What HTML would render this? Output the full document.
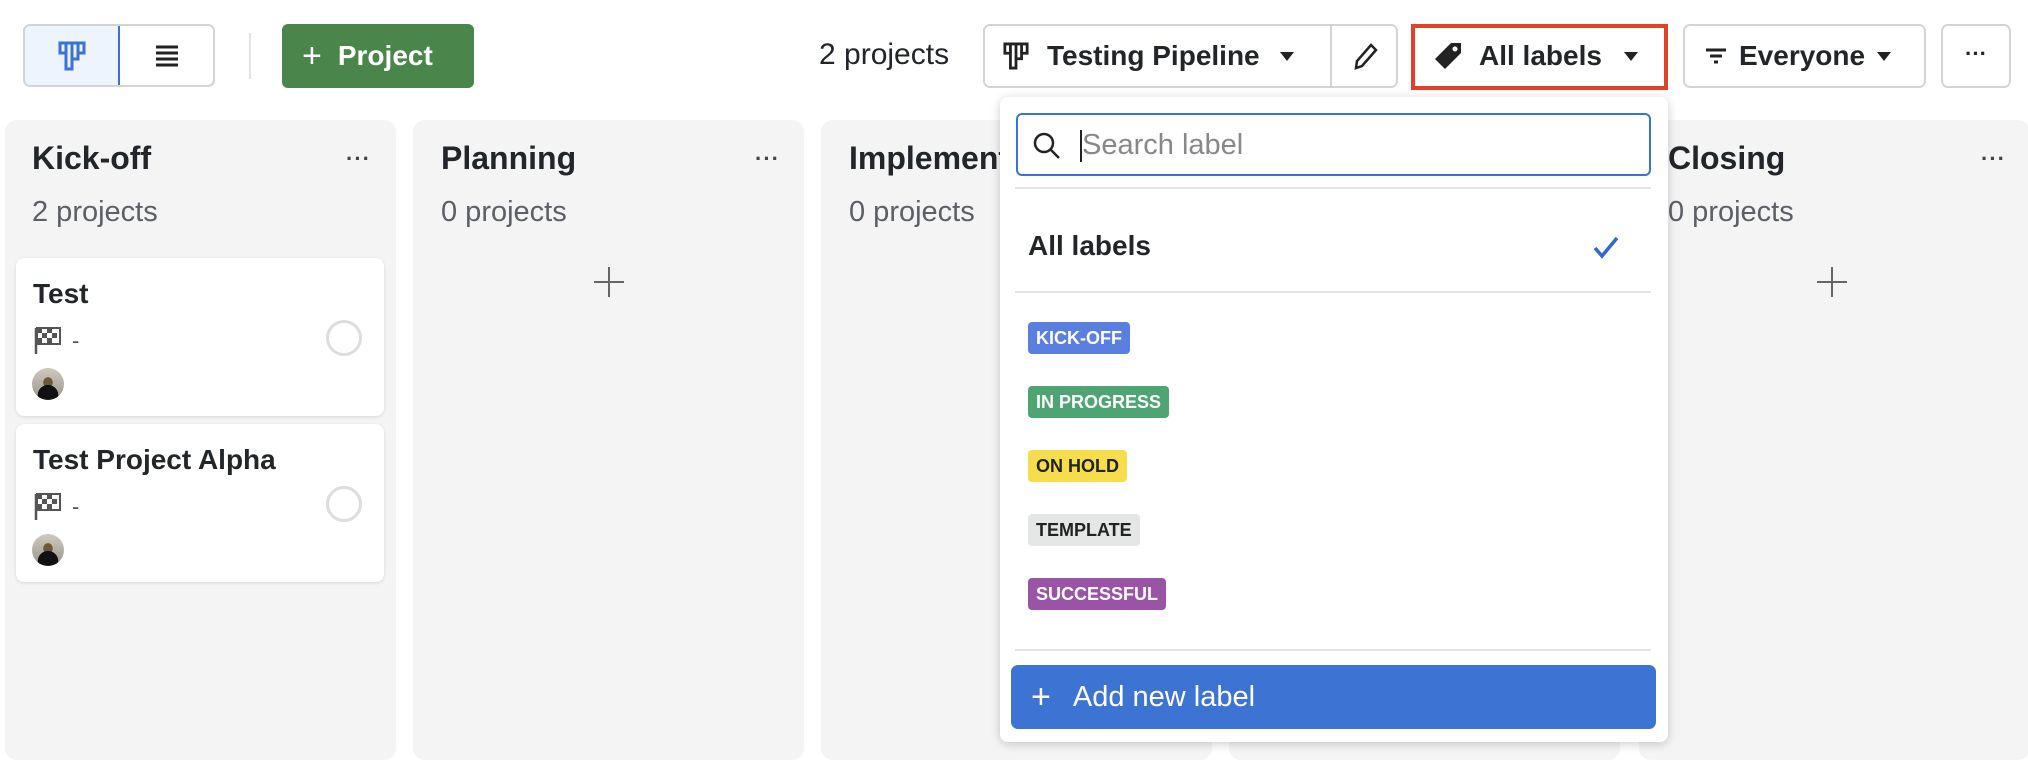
<!DOCTYPE html>
<html><head><meta charset="utf-8"><style>
*{box-sizing:border-box;margin:0;padding:0}
body{width:2028px;height:750px;background:#fff;font-family:"Liberation Sans",sans-serif;color:#22252a;position:relative;overflow:hidden}
.abs{position:absolute}
.btn{position:absolute;border:2px solid #d4d4d4;border-radius:7px;background:#fff;display:flex;align-items:center}
.col{position:absolute;top:120px;width:391px;height:640px;background:#f4f4f4;border-radius:12px}
.ct{position:absolute;left:27px;top:140px;font-size:32px;font-weight:bold}
.cc{position:absolute;left:27px;top:196px;font-size:29px;color:#5c5f66}
.dots{position:absolute;font-size:22px;font-weight:bold;letter-spacing:1px;color:#444}
.plus{position:absolute;width:30px;height:30px}
.plus:before,.plus:after{content:"";position:absolute;background:#666}
.plus:before{left:14px;top:0;width:2px;height:30px}
.plus:after{top:14px;left:0;height:2px;width:30px}
.card{position:absolute;left:16px;width:368px;height:158px;background:#fff;border-radius:8px;box-shadow:0 1px 3px rgba(0,0,0,.12)}
.card .t{position:absolute;left:17px;top:20px;font-size:28px;font-weight:bold}
.card .f{position:absolute;left:18px;top:68px}
.card .d{position:absolute;left:56px;top:70px;font-size:22px;color:#555}
.card .c{position:absolute;left:310px;top:62px;width:36px;height:36px;border:3px solid #ddd;border-radius:50%}
.card .a{position:absolute;left:16px;top:110px;width:32px;height:32px;border-radius:50%;background:radial-gradient(circle at 50% 85%,#111 0 32%,transparent 33%),radial-gradient(ellipse at 50% 45%,#6a5a3a 0 20%,transparent 22%),linear-gradient(#cfc9bf,#9a958c)}
.lbl{position:absolute;left:1028px;height:32px;border-radius:4px;font-size:18px;font-weight:bold;line-height:32px;padding:0 8px;color:#fff}
.tri{display:inline-block;width:0;height:0;border-left:7px solid transparent;border-right:7px solid transparent;border-top:9px solid #222}
</style></head><body>

<div class="btn" style="left:23px;top:24px;width:192px;height:63px;padding:0;overflow:hidden">
 <div style="width:97px;background:#eef4fd;border:2px solid #3a72d6;border-radius:6px 0 0 6px;margin:-2px 0 -2px -2px;height:63px;display:flex;align-items:center;justify-content:center">
  <svg width="28" height="30" viewBox="0 0 28 30"><path d="M2 2h24v10h-6v6h-6v10h-6V12H2z" fill="none" stroke="#3a72d6" stroke-width="3"/><path d="M8 2v10M14 2v16M20 2v10" stroke="#3a72d6" stroke-width="3"/></svg>
 </div>
 <div style="flex:1;display:flex;align-items:center;justify-content:center">
  <svg width="26" height="24"><path d="M2 3h22M2 9h22M2 15h22M2 21h22" stroke="#222" stroke-width="3"/></svg>
 </div>
</div>
<div class="abs" style="left:249px;top:33px;width:2px;height:46px;background:#e2e2e2"></div>
<div class="abs" style="left:282px;top:24px;width:192px;height:64px;background:#4a854c;border-radius:6px;color:#fff;font-size:28px;font-weight:bold;display:flex;align-items:center;padding-left:20px">
 <span style="font-size:34px;font-weight:normal;margin-right:16px">+</span>Project</div>
<div class="abs" style="left:819px;top:38px;font-size:30px">2 projects</div>

<div class="btn" style="left:983px;top:24px;width:415px;height:64px">
 <svg style="margin-left:18px" width="26" height="30" viewBox="0 0 28 30"><path d="M2 2h24v10h-6v6h-6v10h-6V12H2z" fill="none" stroke="#222" stroke-width="3"/><path d="M8 2v10M14 2v16M20 2v10" stroke="#222" stroke-width="3"/></svg>
 <span style="font-size:28px;font-weight:bold;margin-left:18px">Testing Pipeline</span>
 <span class="tri" style="margin-left:20px"></span>
 <div style="position:absolute;left:345px;top:0;width:2px;height:60px;background:#d4d4d4"></div>
 <svg style="position:absolute;left:368px;top:16px" width="26" height="28" viewBox="0 0 26 28"><path d="M18 3l5 5L9 24l-6 2 1-7z" fill="none" stroke="#222" stroke-width="2.5"/></svg>
</div>
<div class="abs" style="left:1411px;top:24px;width:257px;height:66px;border:4px solid #e2402a"></div>
<div class="btn" style="left:1413px;top:26px;width:252px;height:60px;border:none;background:transparent">
 <svg style="margin-left:20px" width="30" height="30" viewBox="0 0 30 30"><path d="M18 2h10v10L12 28 2 18z" fill="#222"/><circle cx="22" cy="8" r="2.5" fill="#fff"/></svg>
 <span style="font-size:28px;font-weight:bold;margin-left:16px">All labels</span>
 <span class="tri" style="margin-left:22px"></span>
</div>
<div class="btn" style="left:1683px;top:24px;width:243px;height:64px">
 <svg style="margin-left:20px" width="22" height="20"><path d="M1 4h20M5 10h12M9 16h4" stroke="#222" stroke-width="3"/></svg>
 <span style="font-size:28px;font-weight:bold;margin-left:12px">Everyone</span>
 <span class="tri" style="margin-left:12px"></span>
</div>
<div class="btn" style="left:1941px;top:24px;width:70px;height:64px;justify-content:center"><span style="font-size:22px;font-weight:bold;margin-top:-4px">···</span></div>

<div class="col" style="left:5px"></div>
<div class="col" style="left:413px"></div>
<div class="col" style="left:821px"></div>
<div class="col" style="left:1229px"></div>
<div class="col" style="left:1639px"></div>

<div class="ct" style="left:32px">Kick-off</div><div class="cc" style="left:32px">2 projects</div><div class="dots" style="left:346px;top:146px">···</div>
<div class="ct" style="left:441px">Planning</div><div class="cc" style="left:441px">0 projects</div><div class="dots" style="left:755px;top:146px">···</div><div class="plus" style="left:594px;top:267px"></div>
<div class="ct" style="left:849px">Implementation</div><div class="cc" style="left:849px">0 projects</div>
<div class="ct" style="left:1668px">Closing</div><div class="cc" style="left:1668px">0 projects</div><div class="dots" style="left:1981px;top:146px">···</div><div class="plus" style="left:1817px;top:267px"></div>

<div class="card" style="top:258px">
 <div class="t">Test</div>
 <svg class="f" width="28" height="28" viewBox="0 0 28 28"><path d="M2 2v26" stroke="#555" stroke-width="2.5"/><rect x="3" y="2" width="23" height="16" fill="#fff" stroke="#555" stroke-width="2"/><path d="M3 2h5v5H3zM13 2h5v5h-5zM8 7h5v5H8zM18 7h5v5h-5zM3 12h5v5H3zM13 12h5v5h-5z" fill="#555"/></svg>
 <div class="d">-</div><div class="c"></div><div class="a"></div>
</div>
<div class="card" style="top:424px">
 <div class="t">Test Project Alpha</div>
 <svg class="f" width="28" height="28" viewBox="0 0 28 28"><path d="M2 2v26" stroke="#555" stroke-width="2.5"/><rect x="3" y="2" width="23" height="16" fill="#fff" stroke="#555" stroke-width="2"/><path d="M3 2h5v5H3zM13 2h5v5h-5zM8 7h5v5H8zM18 7h5v5h-5zM3 12h5v5H3zM13 12h5v5h-5z" fill="#555"/></svg>
 <div class="d">-</div><div class="c"></div><div class="a"></div>
</div>

<div class="abs" style="left:1000px;top:97px;width:668px;height:645px;background:#fff;border-radius:8px;box-shadow:0 2px 10px rgba(0,0,0,.2)"></div>
<div class="abs" style="left:1016px;top:113px;width:635px;height:63px;border:2px solid #3a72d6;border-radius:6px">
 <svg style="position:absolute;left:14px;top:16px" width="30" height="30" viewBox="0 0 30 30"><circle cx="12" cy="12" r="9" fill="none" stroke="#222" stroke-width="2.5"/><path d="M19 19l8 8" stroke="#222" stroke-width="2.5"/></svg>
 <div style="position:absolute;left:62px;top:15px;width:2px;height:32px;background:#222"></div>
 <div style="position:absolute;left:64px;top:14px;font-size:29px;color:#888">Search label</div>
</div>
<div class="abs" style="left:1015px;top:187px;width:636px;height:2px;background:#e4e4e4"></div>
<div class="abs" style="left:1028px;top:230px;font-size:28px;font-weight:bold">All labels</div>
<svg class="abs" style="left:1592px;top:235px" width="28" height="24" viewBox="0 0 28 24"><path d="M3 13l7 8L25 3" fill="none" stroke="#2e6ad0" stroke-width="3.5"/></svg>
<div class="abs" style="left:1015px;top:291px;width:636px;height:2px;background:#e4e4e4"></div>

<div class="lbl" style="top:322px;background:#5b7fe0">KICK-OFF</div>
<div class="lbl" style="top:386px;background:#4ea573">IN PROGRESS</div>
<div class="lbl" style="top:450px;background:#f6dd4b;color:#222">ON HOLD</div>
<div class="lbl" style="top:514px;background:#e5e6e6;color:#222">TEMPLATE</div>
<div class="lbl" style="top:578px;background:#9a54a6">SUCCESSFUL</div>

<div class="abs" style="left:1015px;top:649px;width:636px;height:2px;background:#e4e4e4"></div>
<div class="abs" style="left:1011px;top:665px;width:645px;height:64px;background:#3d74d3;border-radius:7px;color:#fff;font-size:29px;display:flex;align-items:center;padding-left:20px">
 <span style="font-size:34px;margin-right:22px">+</span>Add new label</div>
</body></html>
